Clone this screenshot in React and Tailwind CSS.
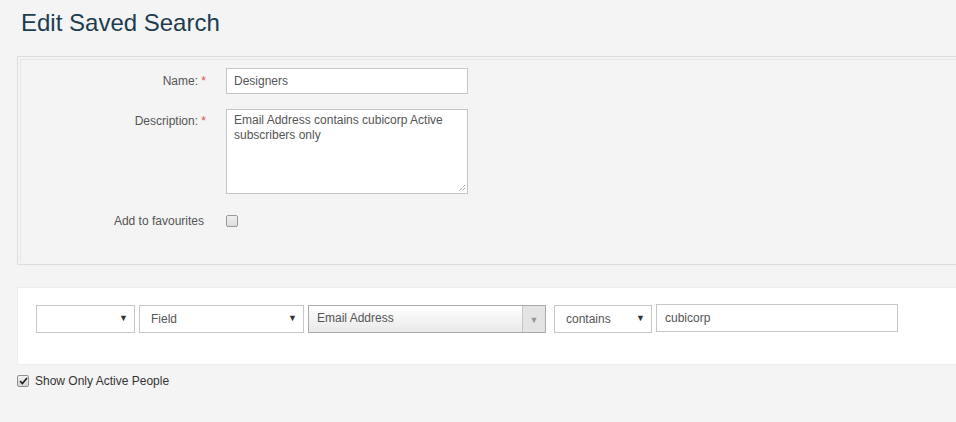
const font = { fontFamily: '"Liberation Sans", Arial, sans-serif' }

function Caret({ className = '' }) {
  return <span className={`text-[9px] text-[#333] ${className}`}>▼</span>
}

function Select({ value, width }) {
  return (
    <div className={`${width} h-[28px] flex items-center justify-between border border-[#c6c6c6] bg-white pl-[11px] pr-[6px] text-[12px] text-[#555]`}>
      <span>{value}</span>
      <Caret />
    </div>
  )
}

export default function App() {
  return (
    <div className="w-[956px] h-[422px] bg-[#f4f4f4] overflow-hidden text-[#444]" style={font}>
      <h1 className="pl-[21px] pt-[9px] h-[56px] text-[24px] leading-[28px] text-[#1c3d4f]">Edit Saved Search</h1>

      <div className="ml-[17px] h-[209px] border border-r-0 border-[#dcdcdc] bg-[#f4f4f4] p-[2px] pr-0">
        <div className="h-full border-l border-t border-[#e6e6e6] pt-[8px]">
          <div className="flex items-center h-[26px]">
            <label className="w-[185px] text-right text-[12px] text-[#555]">
              Name: <span className="text-[#d9534f]">*</span>
            </label>
            <div className="ml-[20px] w-[242px] h-[26px] border border-[#c6c6c6] bg-white flex items-center px-[7px] text-[12px] text-[#555]">
              Designers
            </div>
          </div>
          <div className="flex mt-[15px]">
            <label className="w-[185px] text-right text-[12px] text-[#555] pt-[3px]">
              Description: <span className="text-[#d9534f]">*</span>
            </label>
            <div className="relative ml-[20px] w-[242px] h-[85px] border border-[#c6c6c6] bg-white px-[7px] pt-[3px] text-[12px] leading-[15px] text-[#555]">
              Email Address contains cubicorp Active subscribers only
              <svg className="absolute right-[1px] bottom-[1px]" width="9" height="9" viewBox="0 0 9 9">
                <path d="M8 2 L2 8 M8 5 L5 8" stroke="#777" strokeWidth="1" strokeDasharray="1 1" />
              </svg>
            </div>
          </div>
          <div className="flex items-center mt-[18px]">
            <label className="w-[183px] text-right text-[12px] text-[#555]">Add to favourites</label>
            <div className="ml-[22px] w-[12px] h-[12px] rounded-[2px] border border-[#9a9a9a] bg-gradient-to-b from-[#f0f0f0] to-[#dcdcdc]" />
          </div>
        </div>
      </div>

      <div className="ml-[17px] mt-[22px] h-[78px] bg-white border border-r-0 border-[#ececec] flex items-start pt-[17px] pl-[18px]">
        <Select value="" width="w-[99px]" />
        <Select value="Field" width="w-[165px] ml-[4px]" />
        <div className="ml-[4px] w-[238px] h-[28px] flex border border-[#aaa] bg-gradient-to-b from-white to-[#e9e9e9] text-[12px] text-[#555]">
          <span className="flex-1 pl-[8px] pt-[3px]">Email Address</span>
          <span className="w-[23px] border-l border-[#c6c6c6] bg-[#e4e4e4] flex items-center justify-center">
            <Caret className="text-[#999] text-[7px] mt-[3px]" />
          </span>
        </div>
        <Select value="contains" width="w-[98px] ml-[8px]" />
        <div className="ml-[4px] w-[242px] h-[28px] border border-[#c6c6c6] bg-white flex items-center px-[8px] text-[12px] text-[#555] -mt-[1px]">
          cubicorp
        </div>
      </div>

      <div className="ml-[17px] mt-[7px] flex items-center gap-[6px]">
        <div className="w-[12px] h-[12px] rounded-[2px] border border-[#8f8f8f] bg-gradient-to-b from-[#f2f2f2] to-[#d6d6d6] flex items-center justify-center">
          <svg width="9" height="8" viewBox="0 0 9 8"><path d="M1 4.2 L3.4 6.5 L8 1" fill="none" stroke="#222" strokeWidth="1.7" /></svg>
        </div>
        <span className="text-[12px] text-[#333]">Show Only Active People</span>
      </div>
    </div>
  )
}
